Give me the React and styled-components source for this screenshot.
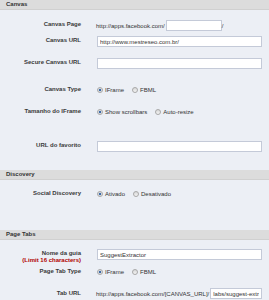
import styled, { createGlobalStyle } from "styled-components";

const GlobalStyle = createGlobalStyle`
    html, body {
        margin: 0;
        padding: 0;
        background: #eceff5;
    }
    body {
        font-family: "Liberation Sans", Arial, sans-serif;
        font-size: 6px;
        color: #333;
    }
`;

const App = () => {
    return (
        <Settings__page>
            <GlobalStyle />

            <Settings__band>Canvas</Settings__band>

            <Settings__row $top={10}>
                <Settings__label>Canvas Page</Settings__label>
                <Settings__value>
                    <Settings__text>http://apps.facebook.com/</Settings__text>
                    <Settings__input $width={56} readOnly value="" />
                    <Settings__text>/</Settings__text>
                </Settings__value>
            </Settings__row>

            <Settings__row $top={5}>
                <Settings__label>Canvas URL</Settings__label>
                <Settings__value>
                    <Settings__input readOnly value="http://www.mestreseo.com.br/" />
                </Settings__value>
            </Settings__row>

            <Settings__row $top={11}>
                <Settings__label>Secure Canvas URL</Settings__label>
                <Settings__value>
                    <Settings__input readOnly value="" />
                </Settings__value>
            </Settings__row>

            <Settings__row $top={15}>
                <Settings__label $center>Canvas Type</Settings__label>
                <Settings__value $gap={8}>
                    <Radio label="IFrame" checked />
                    <Radio label="FBML" />
                </Settings__value>
            </Settings__row>

            <Settings__row $top={11}>
                <Settings__label $center>Tamanho do IFrame</Settings__label>
                <Settings__value $gap={8}>
                    <Radio label="Show scrollbars" checked />
                    <Radio label="Auto-resize" />
                </Settings__value>
            </Settings__row>

            <Settings__row $top={24}>
                <Settings__label>URL do favorito</Settings__label>
                <Settings__value>
                    <Settings__input readOnly value="" />
                </Settings__value>
            </Settings__row>

            <Settings__band $top={18}>Discovery</Settings__band>

            <Settings__row $top={8}>
                <Settings__label $center>Social Discovery</Settings__label>
                <Settings__value $gap={8}>
                    <Radio label="Ativado" checked />
                    <Radio label="Desativado" />
                </Settings__value>
            </Settings__row>

            <Settings__band $top={31}>Page Tabs</Settings__band>

            <Settings__row $top={9}>
                <Settings__label>
                    Nome da guia
                    <Settings__hint>(Limit 16 characters)</Settings__hint>
                </Settings__label>
                <Settings__value>
                    <Settings__input readOnly value="SuggestExtractor" />
                </Settings__value>
            </Settings__row>

            <Settings__row $top={2}>
                <Settings__label $center>Page Tab Type</Settings__label>
                <Settings__value $gap={8}>
                    <Radio label="IFrame" checked />
                    <Radio label="FBML" />
                </Settings__value>
            </Settings__row>

            <Settings__row $top={11}>
                <Settings__label $center>Tab URL</Settings__label>
                <Settings__value>
                    <Settings__text>http://apps.facebook.com/[CANVAS_URL]/</Settings__text>
                    <Settings__input readOnly value="labs/suggest-extractor" />
                </Settings__value>
            </Settings__row>
        </Settings__page>
    );
};

const Radio = ({ label, checked }) => (
    <Settings__option>
        <Settings__radio $checked={checked} />
        {label}
    </Settings__option>
);

const Settings__page = styled.div`
    width: 269px;
    height: 300px;
    overflow: hidden;
    display: flex;
    flex-direction: column;
`;

const Settings__band = styled.div`
    margin-top: ${({ $top }) => $top || 0}px;
    height: 9px;
    line-height: 9px;
    padding-left: 6px;
    background: #dcdcdc;
    border-bottom: 1px solid #d0d0d0;
    font-weight: 700;
    color: #333;
`;

const Settings__row = styled.div`
    margin-top: ${({ $top }) => $top || 0}px;
    display: flex;
    align-items: flex-start;
    gap: 16px;
    min-height: 11px;
    padding-right: 7px;
`;

const Settings__label = styled.div`
    width: 81px;
    flex: 0 0 81px;
    text-align: right;
    font-weight: 700;
    line-height: 7px;
    padding-top: ${({ $center }) => ($center ? 2 : 1)}px;
    color: #3a3a3a;
    white-space: nowrap;
`;

const Settings__hint = styled.span`
    display: block;
    color: #b00000;
`;

const Settings__value = styled.div`
    flex: 1 1 auto;
    display: flex;
    align-items: center;
    gap: ${({ $gap }) => $gap || 1}px;
    height: 11px;
    min-width: 0;
`;

const Settings__text = styled.span`
    white-space: nowrap;
    margin-left: -1px;
    color: #333;
`;

const Settings__input = styled.input`
    box-sizing: border-box;
    width: ${({ $width }) => ($width ? `${$width}px` : "100%")};
    flex: ${({ $width }) => ($width ? `0 0 ${$width}px` : "1 1 0")};
    min-width: 0;
    height: 11px;
    margin: 0;
    padding: 0 2px;
    border: 1px solid #c4cad8;
    background: #fff;
    font-family: "Liberation Sans", Arial, sans-serif;
    font-size: 6px;
    color: #333;
    outline: none;
`;

const Settings__option = styled.label`
    display: flex;
    align-items: center;
    gap: 1px;
    white-space: nowrap;
    color: #333;
`;

const Settings__radio = styled.span`
    box-sizing: border-box;
    width: 6px;
    height: 6px;
    margin-right: 1px;
    border-radius: 50%;
    border: 1px solid #a8a8a8;
    background: ${({ $checked }) =>
        $checked
            ? "radial-gradient(circle, #3c6aa8 0 1.4px, #e6e6e6 1.6px)"
            : "linear-gradient(#d8d8d8, #f4f4f4)"};
`;

export default App;
